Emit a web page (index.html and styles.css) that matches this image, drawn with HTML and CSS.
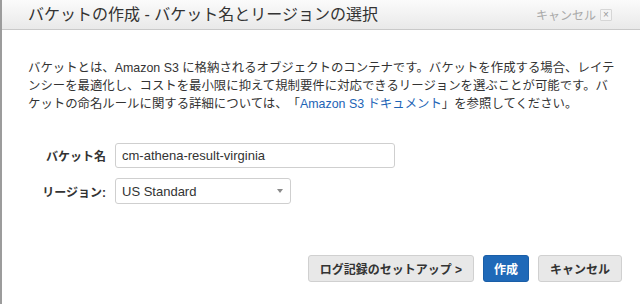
FILE: index.html
```html
<!DOCTYPE html>
<html lang="ja">
<head>
<meta charset="utf-8">
<title>バケットの作成</title>
<link rel="stylesheet" href="styles.css">
</head>
<body>
<div class="dialog">
  <div class="header">
    <h1 class="title">バケットの作成 - バケット名とリージョンの選択</h1>
    <div class="close">キャンセル<span class="close-x">×</span></div>
  </div>
  <div class="content">
    <p class="desc">バケットとは、Amazon S3 に格納されるオブジェクトのコンテナです。バケットを作成する場合、レイテ<br>ンシーを最適化し、コストを最小限に抑えて規制要件に対応できるリージョンを選ぶことが可能です。バ<br>ケットの命名ルールに関する詳細については、「<a class="link" href="#">Amazon S3 ドキュメント</a>」を参照してください。</p>
    <div class="form">
      <label class="label">バケット名</label>
      <div class="input">cm-athena-result-virginia</div>
      <label class="label">リージョン:</label>
      <div class="select">US Standard<span class="arrow"></span></div>
    </div>
    <div class="footer">
      <button class="btn">ログ記録のセットアップ &gt;</button>
      <button class="btn btn-primary">作成</button>
      <button class="btn">キャンセル</button>
    </div>
  </div>
</div>
</body>
</html>
```

FILE: styles.css
```css
* { box-sizing: border-box; text-spacing-trim: space-all; }
html, body { margin: 0; padding: 0; background: #fff; }
body {
  width: 640px;
  height: 304px;
  overflow: hidden;
  font-family: "Liberation Sans", "Noto Sans CJK JP", sans-serif;
  color: #333;
}
.dialog {
  height: 304px;
  border-left: 2px solid #9c9c9c;
  display: flex;
  flex-direction: column;
}
.header {
  height: 30px;
  flex: none;
  display: flex;
  align-items: center;
  justify-content: space-between;
  padding: 0 28px 0 26px;
  background: linear-gradient(#fbfbfb, #e9e9e9);
  border-bottom: 1px solid #c9c9c9;
}
.title {
  margin: 0;
  font-size: 16px;
  font-weight: 400;
  color: #333;
  line-height: 29px;
}
.close {
  display: flex;
  align-items: center;
  font-size: 12px;
  color: #a9a9a9;
}
.close-x {
  margin-left: 4px;
  width: 12px;
  height: 12px;
  border: 1px solid #d6d6d6;
  background: #f4f4f4;
  border-radius: 1px;
  font-size: 10px;
  line-height: 10px;
  text-align: center;
  color: #999;
}
.content {
  padding: 0 18px 0 26px;
}
.desc {
  margin: 29px 0 0;
  font-size: 12.4px;
  line-height: 18px;
  white-space: nowrap;
  color: #333;
}
.link { color: #1d64b6; text-decoration: none; }
.form {
  margin-top: 30px;
  display: grid;
  grid-template-columns: 78px auto;
  column-gap: 9px;
  row-gap: 10px;
  align-items: center;
  justify-items: start;
}
.label {
  justify-self: end;
  font-size: 12px;
  font-weight: 700;
  color: #333;
}
.input, .select {
  height: 25px;
  border: 1px solid #cfcfcf;
  border-radius: 3px;
  background: #fff;
  padding: 0 6px;
  font-size: 13px;
  color: #333;
  display: flex;
  align-items: center;
}
.input { width: 280px; }
.select {
  width: 176px;
  height: 26px;
  justify-content: space-between;
  padding-right: 7px;
}
.arrow {
  width: 0;
  height: 0;
  border-left: 3px solid transparent;
  border-right: 3px solid transparent;
  border-top: 4px solid #8a8a8a;
}
.footer {
  margin-top: 51px;
  display: flex;
  justify-content: flex-end;
  gap: 9px;
}
.btn {
  height: 27px;
  padding: 0 11px;
  font-family: "Liberation Sans", "Noto Sans CJK JP", sans-serif;
  font-size: 12px;
  font-weight: 700;
  color: #333;
  background: #e8e8e8;
  border: 1px solid #d0d0d0;
  border-radius: 3px;
}
.btn-primary {
  background: #1f69b8;
  border-color: #1a5ea7;
  color: #fff;
  padding: 0 10px;
}
```
